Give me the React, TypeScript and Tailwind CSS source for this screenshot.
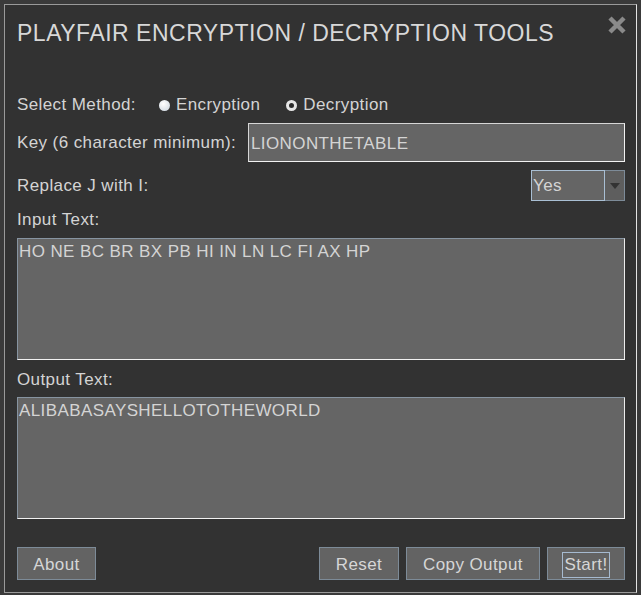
import React from "react";

const font = { fontFamily: '"Liberation Sans", Arial, sans-serif' };

const Radio = ({ checked, label }: { checked: boolean; label: string }) => (
  <label className="flex items-center gap-[6px]">
    {checked ? (
      <span className="w-[11px] h-[11px] rounded-full bg-[radial-gradient(circle_at_40%_35%,#ffffff,#c9d3dd)]" />
    ) : (
      <span className="w-[11px] h-[11px] rounded-full border-[3px] border-[#e6e6e6] bg-[#2a2a2a]" />
    )}
    <span>{label}</span>
  </label>
);

const Button = ({ children, w, focused }: { children: React.ReactNode; w: string; focused?: boolean }) => (
  <button
    className={`${w} h-[33px] flex items-center justify-center pt-[2px] bg-[#636363] border border-[#7d8b98] text-[#d6d6d6] text-[17px] tracking-[0.4px]`}
  >
    {focused ? (
      <span className="h-[26px] px-[1px] flex items-center border border-[#a6bad0]">{children}</span>
    ) : (
      children
    )}
  </button>
);

export default function App() {
  return (
    <div style={font} className="w-[641px] h-[595px] bg-[#3a3a3a] pt-[4px] pl-[4px] overflow-hidden">
      <div className="w-[633px] h-[589px] bg-[#323232] border border-[#9a9a9a] border-r-[#e4e4e4] flex flex-col pl-[12px] pr-[11px] text-[#d4d4d4] text-[17px] tracking-[0.4px]">
        {/* title */}
        <div className="relative pt-[14px]">
          <h1 className="text-[23px] leading-[28px] font-normal tracking-[0.5px] text-[#d8d8d8]">
            PLAYFAIR ENCRYPTION / DECRYPTION TOOLS
          </h1>
          <svg
            className="absolute right-[-3px] top-[11px]"
            width="22"
            height="18"
            viewBox="0 0 22 18"
          >
            <path d="M4 2 L18 16 M18 2 L4 16" stroke="#8a8a8a" strokeWidth="4.5" />
          </svg>
        </div>

        {/* method */}
        <div className="mt-[46px] h-[24px] flex items-center leading-[20px]">
          <span className="w-[142px]">Select Method:</span>
          <Radio checked label="Encryption" />
          <span className="w-[26px]" />
          <Radio checked={false} label="Decryption" />
        </div>

        {/* key */}
        <div className="mt-[6px] h-[39px] flex items-center justify-between">
          <span className="pt-[1px]">Key (6 character minimum):</span>
          <div className="w-[377px] h-[39px] bg-[#656565] border border-[#d6d6d6] border-r-[#f2f2f2] border-b-[#f2f2f2] flex items-center pl-[2px] pt-[2px]">
            LIONONTHETABLE
          </div>
        </div>

        {/* replace */}
        <div className="mt-[8px] h-[31px] flex items-center justify-between">
          <span>Replace J with I:</span>
          <div className="flex h-[31px]">
            <div className="w-[74px] h-full bg-[#656565] border border-[#a9bfd4] flex items-center pl-[1px]">
              Yes
            </div>
            <div className="w-[20px] h-full bg-[#5e5e5e] border border-[#7d8b98] border-l-0 flex items-center justify-center">
              <svg width="10" height="6" viewBox="0 0 10 6">
                <path d="M0 0 H10 L5 6 Z" fill="#333333" />
              </svg>
            </div>
          </div>
        </div>

        {/* input */}
        <div className="mt-[9px] leading-[20px]">Input Text:</div>
        <div className="mt-[8px] h-[122px] bg-[#656565] border border-[#8794a1] border-r-[#ececec] border-b-[#f2f2f2] pl-[1px] pt-[3px] leading-[20px]">
          HO NE BC BR BX PB HI IN LN LC FI AX HP
        </div>

        {/* output */}
        <div className="mt-[10px] leading-[20px]">Output Text:</div>
        <div className="mt-[7px] h-[122px] bg-[#656565] border border-[#8794a1] border-r-[#ececec] border-b-[#f2f2f2] pl-[1px] pt-[3px] leading-[20px]">
          ALIBABASAYSHELLOTOTHEWORLD
        </div>

        {/* buttons */}
        <div className="mt-[28px] flex">
          <Button w="w-[79px]">About</Button>
          <div className="flex-1" />
          <div className="flex gap-[7px]">
            <Button w="w-[80px]">Reset</Button>
            <Button w="w-[134px]">Copy Output</Button>
            <Button w="w-[78px]" focused>
              Start!
            </Button>
          </div>
        </div>
      </div>
    </div>
  );
}
